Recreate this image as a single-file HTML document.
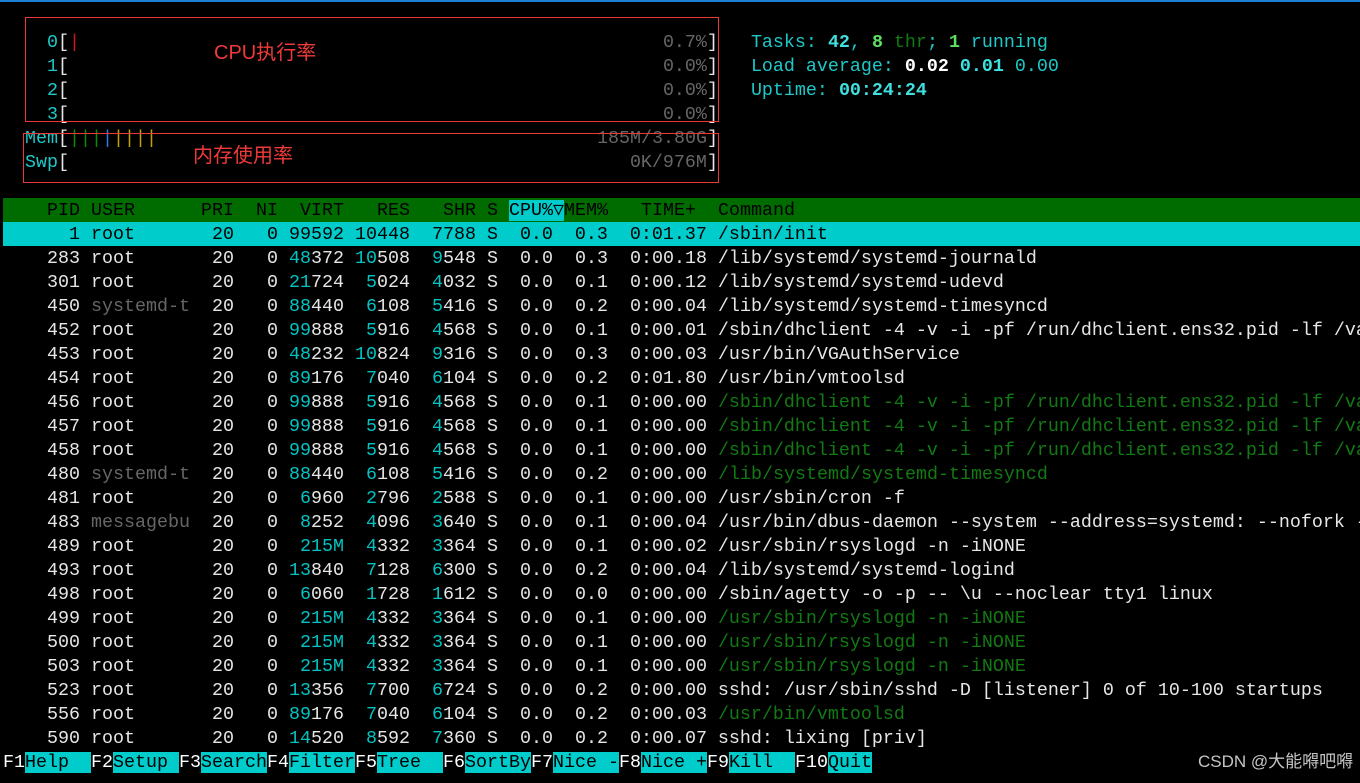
<!DOCTYPE html>
<html><head><meta charset="utf-8">
<style>
html,body{margin:0;padding:0;background:#000;}
body{width:1360px;height:783px;position:relative;overflow:hidden;font-family:"Liberation Mono","DejaVu Sans Mono",monospace;font-size:18.33px;color:#e6e6e6;}
.l{position:absolute;left:3px;height:24px;line-height:25px;white-space:pre;}
.c{color:#00c4c4}
.cb{color:#40e0e0;font-weight:bold}
.g{color:#666}
.gr{color:#127a12}
.w{color:#fff;font-weight:bold}
.bg{color:#5fe05f;font-weight:bold}
.dg{color:#127a12}
.lab{color:#1ec8c8}
.hdr{background:#006c00;color:#000;width:1357px}
.sel{background:#00cccc;color:#000;width:1357px}
.sel .c{color:#000}
.fk{background:#00cccc;color:#000}
.box{position:absolute;border:1px solid #e83838}
.ann{position:absolute;color:#f03a3a;font-family:"Liberation Sans","Noto Sans CJK SC",sans-serif;font-size:20px;line-height:24px}
</style></head><body>
<div style="position:absolute;left:0;top:0;width:1360px;height:2px;background:#1e7fd8"></div>

<div class="l" style="top:30px"><span class="lab">    0</span>[<span style="color:#d01818">|</span>                                                     <span class="g">0.7%</span>]   <span class="lab">Tasks: </span><span class="cb">42</span><span class="lab">, </span><span class="bg">8</span><span class="dg"> thr</span><span class="lab">; </span><span class="bg">1</span><span class="lab"> running</span></div>
<div class="l" style="top:54px"><span class="lab">    1</span>[                                                      <span class="g">0.0%</span>]   <span class="lab">Load average: </span><span class="w">0.02 </span><span class="cb">0.01 </span><span class="lab">0.00</span></div>
<div class="l" style="top:78px"><span class="lab">    2</span>[                                                      <span class="g">0.0%</span>]   <span class="lab">Uptime: </span><span class="cb">00:24:24</span></div>
<div class="l" style="top:102px"><span class="lab">    3</span>[                                                      <span class="g">0.0%</span>]</div>
<div class="l" style="top:126px"><span class="lab">  Mem</span>[<span style="color:#0a8a0a">|||</span><span style="color:#2a7ae0">|</span><span style="color:#c8a000">||||</span>                                        <span class="g">185M/3.80G</span>]</div>
<div class="l" style="top:150px"><span class="lab">  Swp</span>[                                                   <span class="g">0K/976M</span>]</div>

<div class="l hdr" style="top:198px">    PID USER      PRI  NI  VIRT   RES   SHR S <span style="background:#00cccc">CPU%▽</span>MEM%   TIME+  Command</div>
<div class="l sel" style="top:222px">      1 root       20   0 99592 10448  7788 S  0.0  0.3  0:01.37 /sbin/init</div>
<div class="l" style="top:246px">    283 root       20   0 <span class="c">48</span>372 <span class="c">10</span>508  <span class="c">9</span>548 S  0.0  0.3  0:00.18 /lib/systemd/systemd-journald</div>
<div class="l" style="top:270px">    301 root       20   0 <span class="c">21</span>724  <span class="c">5</span>024  <span class="c">4</span>032 S  0.0  0.1  0:00.12 /lib/systemd/systemd-udevd</div>
<div class="l" style="top:294px">    450 <span class="g">systemd-t</span>  20   0 <span class="c">88</span>440  <span class="c">6</span>108  <span class="c">5</span>416 S  0.0  0.2  0:00.04 /lib/systemd/systemd-timesyncd</div>
<div class="l" style="top:318px">    452 root       20   0 <span class="c">99</span>888  <span class="c">5</span>916  <span class="c">4</span>568 S  0.0  0.1  0:00.01 /sbin/dhclient -4 -v -i -pf /run/dhclient.ens32.pid -lf /va</div>
<div class="l" style="top:342px">    453 root       20   0 <span class="c">48</span>232 <span class="c">10</span>824  <span class="c">9</span>316 S  0.0  0.3  0:00.03 /usr/bin/VGAuthService</div>
<div class="l" style="top:366px">    454 root       20   0 <span class="c">89</span>176  <span class="c">7</span>040  <span class="c">6</span>104 S  0.0  0.2  0:01.80 /usr/bin/vmtoolsd</div>
<div class="l" style="top:390px">    456 root       20   0 <span class="c">99</span>888  <span class="c">5</span>916  <span class="c">4</span>568 S  0.0  0.1  0:00.00 <span class="gr">/sbin/dhclient -4 -v -i -pf /run/dhclient.ens32.pid -lf /va</span></div>
<div class="l" style="top:414px">    457 root       20   0 <span class="c">99</span>888  <span class="c">5</span>916  <span class="c">4</span>568 S  0.0  0.1  0:00.00 <span class="gr">/sbin/dhclient -4 -v -i -pf /run/dhclient.ens32.pid -lf /va</span></div>
<div class="l" style="top:438px">    458 root       20   0 <span class="c">99</span>888  <span class="c">5</span>916  <span class="c">4</span>568 S  0.0  0.1  0:00.00 <span class="gr">/sbin/dhclient -4 -v -i -pf /run/dhclient.ens32.pid -lf /va</span></div>
<div class="l" style="top:462px">    480 <span class="g">systemd-t</span>  20   0 <span class="c">88</span>440  <span class="c">6</span>108  <span class="c">5</span>416 S  0.0  0.2  0:00.00 <span class="gr">/lib/systemd/systemd-timesyncd</span></div>
<div class="l" style="top:486px">    481 root       20   0  <span class="c">6</span>960  <span class="c">2</span>796  <span class="c">2</span>588 S  0.0  0.1  0:00.00 /usr/sbin/cron -f</div>
<div class="l" style="top:510px">    483 <span class="g">messagebu</span>  20   0  <span class="c">8</span>252  <span class="c">4</span>096  <span class="c">3</span>640 S  0.0  0.1  0:00.04 /usr/bin/dbus-daemon --system --address=systemd: --nofork -</div>
<div class="l" style="top:534px">    489 root       20   0  <span class="c">215M</span>  <span class="c">4</span>332  <span class="c">3</span>364 S  0.0  0.1  0:00.02 /usr/sbin/rsyslogd -n -iNONE</div>
<div class="l" style="top:558px">    493 root       20   0 <span class="c">13</span>840  <span class="c">7</span>128  <span class="c">6</span>300 S  0.0  0.2  0:00.04 /lib/systemd/systemd-logind</div>
<div class="l" style="top:582px">    498 root       20   0  <span class="c">6</span>060  <span class="c">1</span>728  <span class="c">1</span>612 S  0.0  0.0  0:00.00 /sbin/agetty -o -p -- \u --noclear tty1 linux</div>
<div class="l" style="top:606px">    499 root       20   0  <span class="c">215M</span>  <span class="c">4</span>332  <span class="c">3</span>364 S  0.0  0.1  0:00.00 <span class="gr">/usr/sbin/rsyslogd -n -iNONE</span></div>
<div class="l" style="top:630px">    500 root       20   0  <span class="c">215M</span>  <span class="c">4</span>332  <span class="c">3</span>364 S  0.0  0.1  0:00.00 <span class="gr">/usr/sbin/rsyslogd -n -iNONE</span></div>
<div class="l" style="top:654px">    503 root       20   0  <span class="c">215M</span>  <span class="c">4</span>332  <span class="c">3</span>364 S  0.0  0.1  0:00.00 <span class="gr">/usr/sbin/rsyslogd -n -iNONE</span></div>
<div class="l" style="top:678px">    523 root       20   0 <span class="c">13</span>356  <span class="c">7</span>700  <span class="c">6</span>724 S  0.0  0.2  0:00.00 sshd: /usr/sbin/sshd -D [listener] 0 of 10-100 startups</div>
<div class="l" style="top:702px">    556 root       20   0 <span class="c">89</span>176  <span class="c">7</span>040  <span class="c">6</span>104 S  0.0  0.2  0:00.03 <span class="gr">/usr/bin/vmtoolsd</span></div>
<div class="l" style="top:726px">    590 root       20   0 <span class="c">14</span>520  <span class="c">8</span>592  <span class="c">7</span>360 S  0.0  0.2  0:00.07 sshd: lixing [priv]</div>

<div class="l" style="top:750px;color:#fff">F1<span class="fk">Help  </span>F2<span class="fk">Setup </span>F3<span class="fk">Search</span>F4<span class="fk">Filter</span>F5<span class="fk">Tree  </span>F6<span class="fk">SortBy</span>F7<span class="fk">Nice -</span>F8<span class="fk">Nice +</span>F9<span class="fk">Kill  </span>F10<span class="fk">Quit</span></div>

<div class="box" style="left:25px;top:17px;width:692px;height:103px"></div>
<div class="box" style="left:23px;top:133px;width:694px;height:48px"></div>
<div class="ann" style="left:214px;top:41px">CPU执行率</div>
<div class="ann" style="left:193px;top:144px">内存使用率</div>
<div style="position:absolute;left:1198px;top:749px;white-space:nowrap;line-height:26px;font-family:'Liberation Sans','Noto Sans CJK SC',sans-serif;font-size:17px;color:rgba(230,230,230,0.85)">CSDN @大能嘚吧嘚</div>
</body></html>
